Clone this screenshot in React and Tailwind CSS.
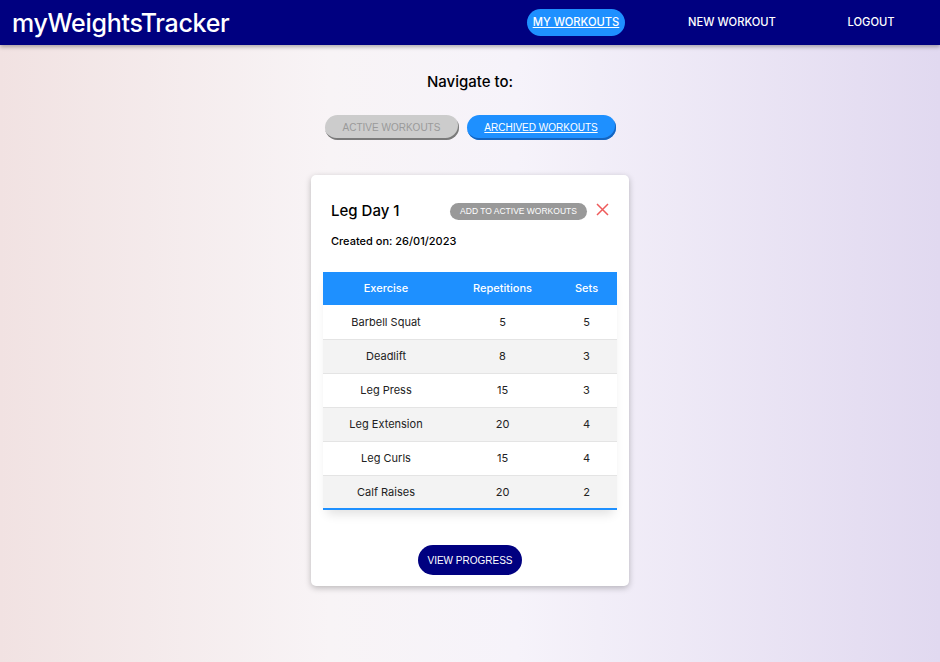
const rows = [
  ['Barbell Squat', 5, 5],
  ['Deadlift', 8, 3],
  ['Leg Press', 15, 3],
  ['Leg Extension', 20, 4],
  ['Leg Curls', 15, 4],
  ['Calf Raises', 20, 2],
];

const poppins = { fontFamily: 'Inter, "Noto Sans", sans-serif' };
const arial = { fontFamily: '"Liberation Sans", Arial, sans-serif' };

export default function App() {
  return (
    <div
      className="min-h-[662px] bg-[linear-gradient(90deg,#f1e2e2_0%,#f8f4f6_35%,#f6f3fa_55%,#e1d9f0_100%)] text-black"
      style={poppins}
    >
      {/* Header */}
      <header className="h-[45px] bg-[#000080] flex items-center shadow-[0_2px_4px_rgba(0,0,0,0.3)] relative">
        <div className="pl-[12px] pt-[2px] text-white text-[25px] font-medium tracking-[-0.3px]">myWeightsTracker</div>
        <nav className="ml-auto flex items-center text-white text-[11.2px] font-medium whitespace-nowrap">
          <a className="w-[98px] h-[27px] rounded-full bg-[#1e90ff] flex items-center justify-center underline mr-[47px]">MY WORKOUTS</a>
          <a className="w-[120px] text-center mr-[19px]">NEW WORKOUT</a>
          <a className="w-[120px] text-center mr-[9px]">LOGOUT</a>
        </nav>
      </header>

      <main className="flex flex-col items-center">
        <h2 className="mt-[27px] text-[15px] font-medium leading-[20px]">Navigate to:</h2>

        <div className="mt-[23px] flex gap-[8px]" style={arial}>
          <button className="w-[134px] h-[25px] rounded-full bg-[#cccccc] text-[#9a9a9a] text-[10px] shadow-[inset_-1px_-2px_0_#7a7a7a]">
            ACTIVE WORKOUTS
          </button>
          <button className="w-[149px] h-[25px] rounded-full bg-[#1e90ff] text-white text-[10px] underline shadow-[inset_-1px_-2px_0_#1565c0]">
            ARCHIVED WORKOUTS
          </button>
        </div>

        {/* Card */}
        <div className="mt-[35px] w-[318px] bg-white rounded-[5px] shadow-[0_2px_6px_rgba(0,0,0,0.25)] px-[12px] pt-[25px] pb-[11px]">
          <div className="flex items-center pl-[8px]">
            <div className="text-[15px] font-medium">Leg Day 1</div>
            <button className="ml-auto h-[17px] w-[137px] rounded-full bg-[#999999] text-white text-[8.5px]" style={arial}>
              ADD TO ACTIVE WORKOUTS
            </button>
            <svg className="ml-[9px] mr-[8px] -mt-[3px]" width="13" height="13" viewBox="0 0 13 13">
              <path d="M1 1 L12 12 M12 1 L1 12" stroke="#ee5b5b" strokeWidth="1.5" />
            </svg>
          </div>
          <div className="mt-[10px] pl-[8px] text-[11px] font-medium">Created on: 26/01/2023</div>

          <table className="mt-[23px] w-[294px] border-collapse text-[11px] shadow-[0_8px_10px_-4px_rgba(0,0,0,0.12)] border-b-2 border-[#1e90ff]">
            <thead>
              <tr className="bg-[#1e90ff] text-white h-[33px]">
                <th className="w-[126px] font-medium">Exercise</th>
                <th className="w-[107px] font-medium">Repetitions</th>
                <th className="font-medium">Sets</th>
              </tr>
            </thead>
            <tbody className="text-[#222]">
              {rows.map((r, i) => (
                <tr key={r[0]} className={`h-[34px] ${i % 2 ? 'bg-[#f3f3f3]' : 'bg-white'} ${i < rows.length - 1 ? 'border-b border-[#e4e4e4]' : ''}`}>
                  <td className="text-center">{r[0]}</td>
                  <td className="text-center">{r[1]}</td>
                  <td className="text-center">{r[2]}</td>
                </tr>
              ))}
            </tbody>
          </table>

          <div className="mt-[35px] flex justify-center">
            <button className="w-[104px] h-[30px] rounded-full bg-[#000080] text-white text-[10px]" style={arial}>
              VIEW PROGRESS
            </button>
          </div>
        </div>
      </main>
    </div>
  );
}
